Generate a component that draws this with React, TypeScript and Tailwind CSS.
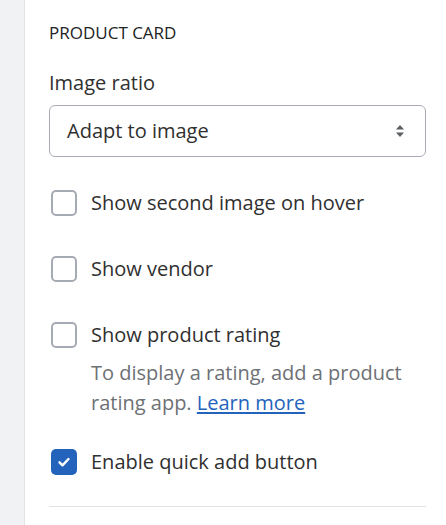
import React from "react";

function Checkbox({ checked }: { checked?: boolean }) {
  if (checked) {
    return (
      <span className="flex h-[26px] w-[26px] shrink-0 items-center justify-center rounded-[5px] bg-[#2463bc]">
        <svg width="16" height="16" viewBox="0 0 16 16" fill="none">
          <path d="M3.5 8.3l3 3 6-6.3" stroke="white" strokeWidth="2.4" strokeLinecap="round" strokeLinejoin="round" />
        </svg>
      </span>
    );
  }
  return <span className="h-[26px] w-[26px] shrink-0 rounded-[5px] border-2 border-[#a6abb3] bg-white" />;
}

function CheckRow({ label, checked }: { label: string; checked?: boolean }) {
  return (
    <div className="flex items-center gap-[14px] pl-[2px]">
      <Checkbox checked={checked} />
      <span className="text-[20px] leading-[26px] text-[#303030]">{label}</span>
    </div>
  );
}

export default function App() {
  return (
    <div className="flex h-[525px] w-[446px] overflow-hidden bg-white" style={{ fontFamily: '"Open Sans", "Noto Sans", sans-serif' }}>
      <div className="w-[25px] shrink-0 border-r border-[#e3e4e6] bg-[#f1f2f4]" />
      <div className="flex w-[401px] flex-col pl-[24px] pt-[21px]">
        <h2 className="text-[17px] font-normal leading-[24px] text-[#202223]">PRODUCT CARD</h2>
        <label className="mt-[26px] text-[20px] leading-[24px] text-[#303030]">Image ratio</label>
        <div className="mt-[10px] flex h-[52px] items-center justify-between rounded-[6px] border border-[#a9adb3] pl-[17px] pr-[20px]">
          <span className="text-[20px] text-[#303030]">Adapt to image</span>
          <svg width="10" height="14" viewBox="0 0 10 14">
            <path d="M5 1L9 5.5H1z" fill="#5c5f62" />
            <path d="M5 13L9 8.5H1z" fill="#5c5f62" />
          </svg>
        </div>
        <div className="mt-[33px] flex flex-col">
          <CheckRow label="Show second image on hover" />
          <div className="mt-[40px]">
            <CheckRow label="Show vendor" />
          </div>
          <div className="mt-[40px]">
            <CheckRow label="Show product rating" />
          </div>
          <p className="mt-[10px] pl-[42px] text-[20px] leading-[30px] text-[#6d7175]">
            To display a rating, add a product rating app.{" "}
            <a className="text-[#2463bc] underline underline-offset-2">Learn more</a>
          </p>
          <div className="mt-[31px]">
            <CheckRow label="Enable quick add button" checked />
          </div>
        </div>
        <div className="mt-[31px] h-px w-full bg-[#e1e3e5]" />
      </div>
    </div>
  );
}
